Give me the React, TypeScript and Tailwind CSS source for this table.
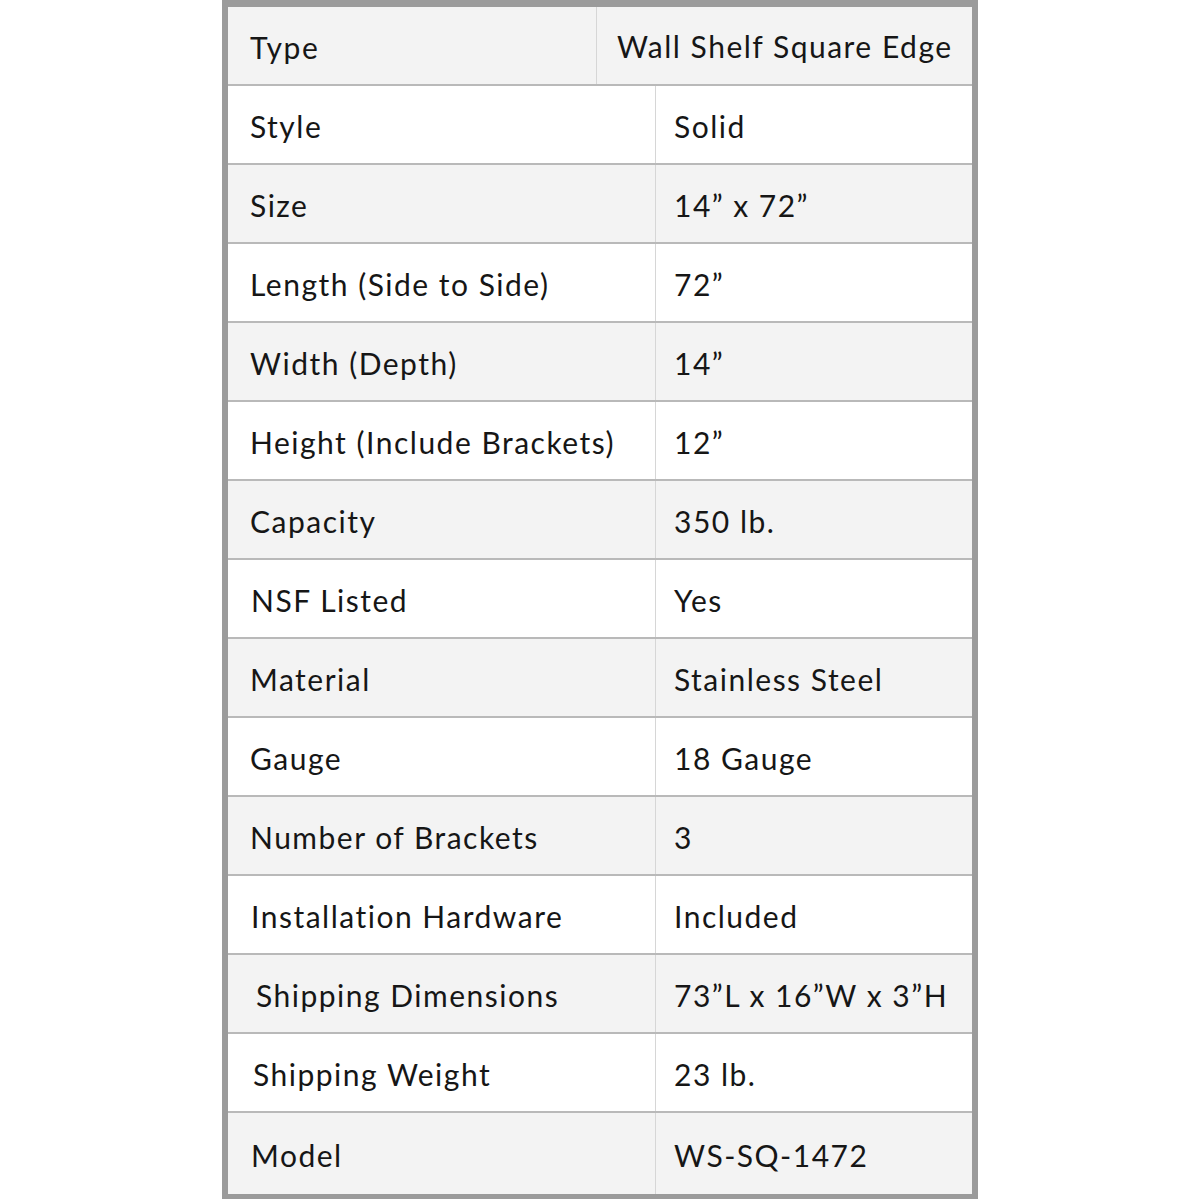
import React from "react";

const rows: [string, string, string][] = [
  ["Style", "Solid", "pl-[22px]"],
  ["Size", "14” x 72”", "pl-[22px]"],
  ["Length (Side to Side)", "72”", "pl-[22px]"],
  ["Width (Depth)", "14”", "pl-[22px]"],
  ["Height (Include Brackets)", "12”", "pl-[22px]"],
  ["Capacity", "350 lb.", "pl-[22px]"],
  ["NSF Listed", "Yes", "pl-[23px]"],
  ["Material", "Stainless Steel", "pl-[22px]"],
  ["Gauge", "18 Gauge", "pl-[22px]"],
  ["Number of Brackets", "3", "pl-[22px]"],
  ["Installation Hardware", "Included", "pl-[23px]"],
  ["Shipping Dimensions", "73”L x 16”W x 3”H", "pl-[28px]"],
  ["Shipping Weight", "23 lb.", "pl-[25px]"],
  ["Model", "WS-SQ-1472", "pl-[23px]"],
];

export default function App() {
  return (
    <div className="w-[1200px] h-[1200px] bg-white" style={{ fontFamily: "Lato, 'Open Sans', sans-serif" }}>
      <div className="ml-[222px] w-[756px] border-x-[6px] border-t-[7px] border-b-[5px] border-[#9b9b9b] text-[30px] text-[#161616] tracking-[1.5px]">
        <div className="flex h-[79px] bg-[#f3f3f3] border-b-2 border-[#b9b9b9]">
          <div className="w-[369px] flex items-center pt-[3px] pl-[22px] border-r border-[#d6d6d6]">Type</div>
          <div className="flex-1 flex items-center pt-[1px] pl-[20px]">Wall Shelf Square Edge</div>
        </div>
        {rows.map(([k, v, pad], i) => (
          <div
            key={k}
            className={`flex ${i === rows.length - 1 ? "h-[81px]" : "h-[79px] border-b-2 border-[#b9b9b9]"} ${i % 2 === 1 ? "bg-[#f3f3f3]" : "bg-white"}`}
          >
            <div className={`w-[428px] flex items-center pt-[4px] ${pad} border-r border-[#d6d6d6]`}>{k}</div>
            <div className="flex-1 flex items-center pt-[4px] pl-[18px]">{v}</div>
          </div>
        ))}
      </div>
    </div>
  );
}
